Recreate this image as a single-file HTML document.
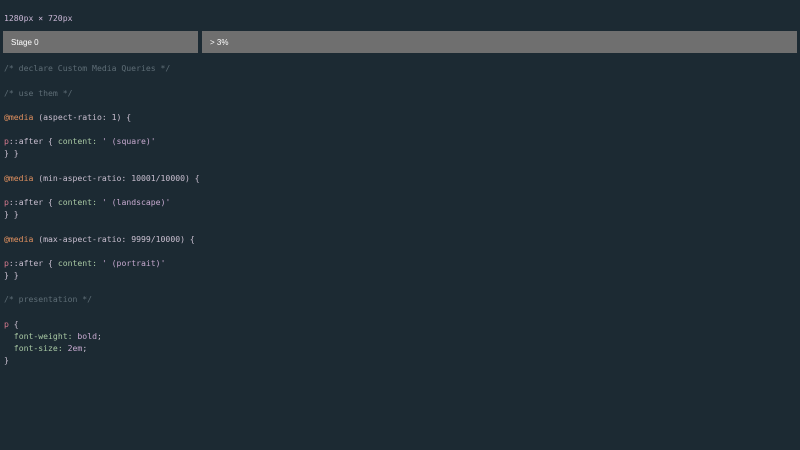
<!DOCTYPE html>
<html><head><meta charset="utf-8"><style>
html,body{margin:0;padding:0;width:800px;height:450px;overflow:hidden;background:#1c2a33;}
body{position:relative;font-family:"DejaVu Sans Mono","Liberation Mono",monospace;font-size:8.15px;color:#c9bfd0;}
.l{position:absolute;left:4px;white-space:pre;line-height:12px;}
.c{color:#5e6d76}.a{color:#e0905f}.s{color:#d77a8f}.g{color:#a9c9a4}.p{color:#c6a9cf}
.bar{position:absolute;top:31px;height:22px;background:#6f6f6f;color:#fff;font-family:"Liberation Sans","DejaVu Sans",sans-serif;font-size:8px;line-height:23px;padding-left:8px;box-sizing:border-box;}
</style></head><body>
<div class="l" style="top:12px;color:#c8b6d4">1280px × 720px</div>
<div class="bar" style="left:3px;width:195px">Stage 0</div>
<div class="bar" style="left:202px;width:595px">&gt; 3%</div>
<div class="l c" style="top:62px">/* declare Custom Media Queries */</div>
<div class="l c" style="top:87px">/* use them */</div>
<div class="l" style="top:111px"><span class="a">@media</span> (aspect-ratio: 1) {</div>
<div class="l" style="top:135px"><span class="s">p</span>::after { <span class="g">content:</span> <span class="p">' (square)'</span></div>
<div class="l" style="top:147px">} }</div>
<div class="l" style="top:172px"><span class="a">@media</span> (min-aspect-ratio: 10001/10000) {</div>
<div class="l" style="top:196px"><span class="s">p</span>::after { <span class="g">content:</span> <span class="p">' (landscape)'</span></div>
<div class="l" style="top:208px">} }</div>
<div class="l" style="top:233px"><span class="a">@media</span> (max-aspect-ratio: 9999/10000) {</div>
<div class="l" style="top:257px"><span class="s">p</span>::after { <span class="g">content:</span> <span class="p">' (portrait)'</span></div>
<div class="l" style="top:269px">} }</div>
<div class="l c" style="top:293px">/* presentation */</div>
<div class="l" style="top:318px"><span class="s">p</span> {</div>
<div class="l" style="top:330px">  <span class="g">font-weight:</span> <span class="p">bold</span>;</div>
<div class="l" style="top:342px">  <span class="g">font-size:</span> <span class="p">2em</span>;</div>
<div class="l" style="top:354px">}</div>
</body></html>
